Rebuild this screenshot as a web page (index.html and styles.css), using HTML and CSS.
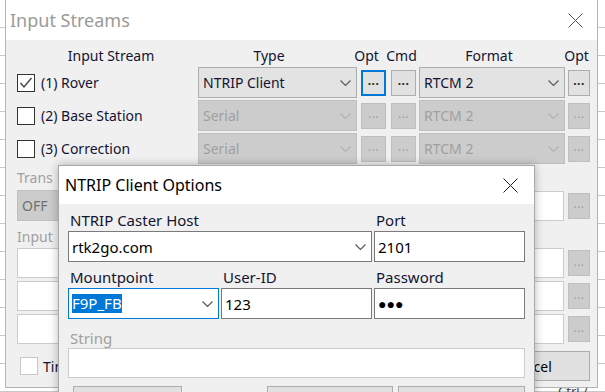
FILE: index.html
```html
<!DOCTYPE html>
<html lang="en">
<head>
    <meta charset="UTF-8">
    <meta name="viewport" content="width=device-width, initial-scale=1.0">
    <title>Input Streams</title>
    <link rel="stylesheet" href="styles.css">
</head>
<body>
<div class="desk">
    <span class="bg-text">Ctrl /</span>

    <div class="win streams">
        <div class="titlebar">
            <span class="title">Input Streams</span>
            <svg class="close" width="15" height="15" viewBox="0 0 15 15"><path d="M0.5 0.5L14.5 14.5M14.5 0.5L0.5 14.5"/></svg>
        </div>
        <div class="content">
            <div class="grid">
                <span class="hd hd-stream">Input Stream</span>
                <span class="hd hd-type">Type</span>
                <span class="hd hd-opt">Opt</span>
                <span class="hd hd-cmd">Cmd</span>
                <span class="hd hd-fmt">Format</span>
                <span class="hd hd-opt2">Opt</span>

                <div class="chk-row">
                    <span class="chk"><svg width="16" height="16" viewBox="0 0 16 16"><polyline points="2.5,8 6,12 13.5,3"/></svg></span>
                    (1) Rover
                </div>
                <div class="combo type">NTRIP Client<svg class="chev" width="11" height="6" viewBox="0 0 11 6"><polyline points="0.5,0.5 5.5,5.5 10.5,0.5"/></svg></div>
                <div class="dots focus">...</div>
                <div class="dots">...</div>
                <div class="combo fmt">RTCM 2<svg class="chev" width="11" height="6" viewBox="0 0 11 6"><polyline points="0.5,0.5 5.5,5.5 10.5,0.5"/></svg></div>
                <div class="dots">...</div>

                <div class="chk-row"><span class="chk"></span>(2) Base Station</div>
                <div class="combo type off">Serial<svg class="chev" width="11" height="6" viewBox="0 0 11 6"><polyline points="0.5,0.5 5.5,5.5 10.5,0.5"/></svg></div>
                <div class="dots off">...</div>
                <div class="dots off">...</div>
                <div class="combo fmt off">RTCM 2<svg class="chev" width="11" height="6" viewBox="0 0 11 6"><polyline points="0.5,0.5 5.5,5.5 10.5,0.5"/></svg></div>
                <div class="dots off">...</div>

                <div class="chk-row"><span class="chk"></span>(3) Correction</div>
                <div class="combo type off">Serial<svg class="chev" width="11" height="6" viewBox="0 0 11 6"><polyline points="0.5,0.5 5.5,5.5 10.5,0.5"/></svg></div>
                <div class="dots off">...</div>
                <div class="dots off">...</div>
                <div class="combo fmt off">RTCM 2<svg class="chev" width="11" height="6" viewBox="0 0 11 6"><polyline points="0.5,0.5 5.5,5.5 10.5,0.5"/></svg></div>
                <div class="dots off">...</div>
            </div>

            <div class="dis-label trans-label">Trans</div>
            <div class="line-row trans-row">
                <div class="combo nmea off dark">OFF<svg class="chev" width="11" height="6" viewBox="0 0 11 6"><polyline points="0.5,0.5 5.5,5.5 10.5,0.5"/></svg></div>
                <div class="field-box short"></div>
                <div class="dots off">...</div>
            </div>

            <div class="dis-label input-label">Input</div>
            <div class="fields">
                <div class="line-row"><div class="field-box"></div><div class="dots off">...</div></div>
                <div class="line-row"><div class="field-box"></div><div class="dots off">...</div></div>
                <div class="line-row"><div class="field-box"></div><div class="dots off">...</div></div>
            </div>

            <div class="line-row bottom-row">
                <span class="chk dim"></span>
                <span class="chk-text">Time Tag</span>
                <div class="btn ok">OK</div>
                <div class="btn cancel">Cancel</div>
            </div>
        </div>
    </div>

    <div class="win ntrip">
        <div class="titlebar">
            <span class="title">NTRIP Client Options</span>
            <svg class="close" width="15" height="15" viewBox="0 0 15 15"><path d="M0.5 0.5L14.5 14.5M14.5 0.5L0.5 14.5"/></svg>
        </div>
        <div class="content">
            <div class="form">
                <div class="field span2">
                    <span class="flabel">NTRIP Caster Host</span>
                    <div class="edit">rtk2go.com<svg class="chev" width="11" height="6" viewBox="0 0 11 6"><polyline points="0.5,0.5 5.5,5.5 10.5,0.5"/></svg></div>
                </div>
                <div class="field">
                    <span class="flabel">Port</span>
                    <div class="edit">2101</div>
                </div>
                <div class="field">
                    <span class="flabel">Mountpoint</span>
                    <div class="edit focus"><span class="sel">F9P_FB</span><svg class="chev" width="11" height="6" viewBox="0 0 11 6"><polyline points="0.5,0.5 5.5,5.5 10.5,0.5"/></svg></div>
                </div>
                <div class="field">
                    <span class="flabel">User-ID</span>
                    <div class="edit">123</div>
                </div>
                <div class="field">
                    <span class="flabel">Password</span>
                    <div class="edit pw">●●●</div>
                </div>
                <div class="field span3 string">
                    <span class="flabel dim">String</span>
                    <div class="edit dim"></div>
                </div>
            </div>
            <div class="btns">
                <div class="btn b1"></div>
                <div class="btn b2"></div>
                <div class="btn b3"></div>
            </div>
        </div>
    </div>
</div>
</body>
</html>
```

FILE: styles.css
```css
* {
    box-sizing: border-box;
}
body {
    margin: 0;
    font-family: "Noto Sans", sans-serif;
    font-size: 14px;
    color: #000;
}
.desk {
    position: relative;
    width: 605px;
    height: 392px;
    overflow: hidden;
    background: #fff repeating-linear-gradient(to bottom, transparent 0 27px, #c9c9c9 27px 28px);
}
.bg-text {
    position: absolute;
    left: 558px;
    top: 383px;
    font-size: 13px;
    line-height: 16px;
    color: #444;
}

/* windows */
.win {
    position: absolute;
    background: #f0f0f0;
    border: 1px solid #b4b4b4;
}
.streams {
    left: 5px;
    top: -1px;
    width: 593px;
    height: 389px;
}
.ntrip {
    left: 58px;
    top: 165px;
    width: 477px;
    height: 260px;
    border-color: #a8a8a8;
    box-shadow: 0 0 9px rgba(0, 0, 0, 0.28);
}
.titlebar {
    display: flex;
    align-items: center;
    background: #fff;
}
.streams .titlebar {
    height: 40px;
    padding: 0 14px 0 4px;
}
.ntrip .titlebar {
    height: 38px;
    padding: 0 16px 0 6px;
}
.title {
    flex: 1;
}
.streams .title {
    font-size: 18px;
    color: #9a9a9a;
}
.ntrip .title {
    font-size: 16px;
    color: #000;
}
.close path {
    stroke: #555;
    stroke-width: 1;
    fill: none;
}
.ntrip .close path {
    stroke: #222;
}

/* input streams body */
.streams .content {
    padding: 5px 7px 0 11px;
}
.grid {
    display: grid;
    grid-template-columns: 181px 163px 30px 28px 149px 22px;
    grid-template-rows: 20px repeat(3, 31px);
    row-gap: 2px;
    align-items: center;
}
.hd {
    justify-self: center;
    white-space: nowrap;
    color: #141432;
}
.hd-stream { margin-left: 7px; }
.hd-type { margin-right: 21px; }
.hd-opt { margin-right: 19px; }
.hd-cmd { margin-right: 7px; }
.hd-fmt { margin-right: 9px; }
.hd-opt2 { margin-right: 5px; }

.chk-row {
    display: flex;
    align-items: center;
    gap: 6px;
    color: #141432;
}
.chk {
    width: 18px;
    height: 18px;
    border: 1px solid #333;
    background: #fff;
    display: flex;
    align-items: center;
    justify-content: center;
}
.chk polyline {
    fill: none;
    stroke: #444;
    stroke-width: 1.4;
}
.chk.dim {
    border-color: #c8c8c8;
}

.combo {
    height: 31px;
    display: flex;
    align-items: center;
    justify-content: space-between;
    padding: 0 5px 0 4px;
    background: #e3e3e3;
    border: 1px solid #adadad;
    color: #141432;
}
.combo.type { width: 159px; }
.combo.fmt { width: 146px; }
.combo.off {
    background: #cccccc;
    border-color: #bfbfbf;
    color: #a0a0a0;
}
.combo.dark {
    color: #707070;
}
.combo.nmea { width: 180px; }
.chev polyline {
    fill: none;
    stroke: #5a5a5a;
    stroke-width: 1.2;
}
.off .chev polyline {
    stroke: #b4b4b4;
}

.dots {
    width: 25px;
    height: 26px;
    display: flex;
    align-items: center;
    justify-content: center;
    padding-bottom: 4px;
    background: #e1e1e1;
    border: 1px solid #adadad;
    font-size: 12px;
    font-weight: bold;
    letter-spacing: 0.5px;
    color: #222;
}
.grid .dots:nth-child(6n) {
    width: 22px;
}
.dots.focus {
    border: 2px solid #0078d7;
}
.dots.off {
    background: #cccccc;
    border-color: #bfbfbf;
    color: #a0a0a0;
    font-weight: normal;
}
.line-row .dots {
    width: 22px;
    margin-left: 4px;
}

.dis-label {
    line-height: 16px;
    color: #a0a0a0;
    white-space: nowrap;
}
.trans-label { margin-top: 6px; }
.input-label { margin-top: 8px; }
.line-row {
    display: flex;
    align-items: center;
}
.trans-row {
    margin-top: 4px;
    height: 31px;
}
.field-box {
    flex: 1;
    height: 30px;
    background: #fff;
    border: 1px solid #cccccc;
}
.field-box.short {
    flex: none;
    width: 260px;
    margin-left: auto;
}
.fields {
    margin-top: 3px;
    display: flex;
    flex-direction: column;
    gap: 3px;
}
.bottom-row {
    margin-top: 7px;
    height: 30px;
}
.bottom-row .chk {
    margin-left: 3px;
}
.chk-text {
    margin-left: 5px;
    color: #141432;
}
.btn {
    height: 30px;
    display: flex;
    align-items: center;
    justify-content: center;
    background: #e1e1e1;
    border: 1px solid #adadad;
}
.btn.ok {
    width: 120px;
    margin-left: auto;
}
.btn.cancel {
    width: 120px;
    margin-left: 6px;
}

/* ntrip dialog body */
.ntrip .content {
    padding: 7px 9px 0 9px;
}
.form {
    display: grid;
    grid-template-columns: repeat(3, 151px);
    column-gap: 2px;
    row-gap: 6px;
}
.field {
    display: flex;
    flex-direction: column;
}
.span2 { grid-column: span 2; }
.span3 { grid-column: span 3; }
.flabel {
    font-size: 15px;
    line-height: 18px;
    margin: 0 0 2px 2px;
    color: #141432;
}
.flabel.dim {
    color: #a0a0a0;
}
.edit {
    height: 31px;
    display: flex;
    align-items: center;
    justify-content: space-between;
    padding: 0 5px 0 3px;
    background: #fff;
    border: 1px solid #7a7a7a;
    font-size: 15px;
}
.edit.focus {
    border-color: #0078d7;
}
.edit.dim {
    height: 30px;
    border-color: #cccccc;
}
.edit.pw {
    font-size: 14px;
    letter-spacing: 0;
    justify-content: flex-start;
}
.sel {
    background: #0078d7;
    color: #fff;
    line-height: 19px;
}
.string {
    margin-top: 4px;
}
.string .flabel {
    margin-bottom: 1px;
}
.btns {
    display: flex;
    margin-top: 8px;
    gap: 5px;
}
.btns .btn.b1 {
    width: 109px;
    margin-left: 5px;
    margin-right: auto;
}
.btns .btn.b2 { width: 126px; }
.btns .btn.b3 { width: 127px; }
```
